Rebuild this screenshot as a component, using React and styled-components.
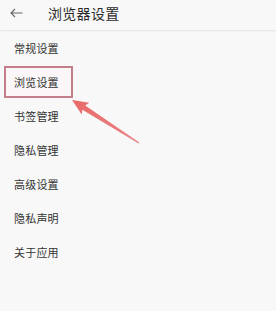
import React from "react";
import styled, { createGlobalStyle } from "styled-components";

const Global = createGlobalStyle`
  html, body { margin: 0; padding: 0; background: #f7f8f7; }
  body { font-family: "Noto Sans CJK SC", "Noto Sans", sans-serif; }
`;

const Page = styled.div`
  position: relative;
  width: 276px;
  height: 311px;
  background: #f7f8f7;
  overflow: hidden;
`;

const Header = styled.div`
  height: 31px;
  box-sizing: border-box;
  padding-bottom: 5px;
  display: flex;
  align-items: center;
  border-bottom: 1px solid #e8eae9;
  box-shadow: 0 1px 2px rgba(0,0,0,0.03);
`;

const Back = styled.div`
  width: 48px;
  padding-left: 10px;
  box-sizing: border-box;
  display: flex;
  align-items: center;
`;

const Title = styled.div`
  font-size: 14px;
  color: #2a2a2a;
  letter-spacing: 0.3px;
`;

const List = styled.div`
  display: flex;
  flex-direction: column;
`;

const Item = styled.div`
  height: 34px;
  display: flex;
  align-items: center;
  padding-left: 14px;
  font-size: 11px;
  color: #333;
  letter-spacing: 0.2px;
`;

const Boxed = styled.span`
  margin-left: -10px;
  padding: 6px 12px 6px 8px;
  border: 2px solid #c47f8a;
  background: #fbf6f7;
`;

const Arrow = styled.svg`
  position: absolute;
  left: 60px;
  top: 90px;
`;

export default function App() {
  const items = ["常规设置", "浏览设置", "书签管理", "隐私管理", "高级设置", "隐私声明", "关于应用"];
  return (
    <Page>
      <Global />
      <Header>
        <Back>
          <svg width="13" height="10" viewBox="0 0 13 10">
            <path d="M12.5 5H1.2M5 1L1 5l4 4" fill="none" stroke="#666" strokeWidth="1.1" />
          </svg>
        </Back>
        <Title>浏览器设置</Title>
      </Header>
      <List>
        {items.map((t) =>
          t === "浏览设置" ? (
            <Item key={t}><Boxed>{t}</Boxed></Item>
          ) : (
            <Item key={t}>{t}</Item>
          )
        )}
      </List>
      <Arrow width="90" height="60" viewBox="0 0 90 60">
        <defs>
          <linearGradient id="g" x1="0" y1="0" x2="1" y2="1">
            <stop offset="0" stopColor="#e8686a" />
            <stop offset="1" stopColor="#ea8585" />
          </linearGradient>
        </defs>
        <path d="M12 10 L29.3 12.7 L25.2 15.5 L79.4 52.4 L78.6 53.6 L22.4 19.7 L21.7 24.5 Z" fill="url(#g)" />
      </Arrow>
    </Page>
  );
}
